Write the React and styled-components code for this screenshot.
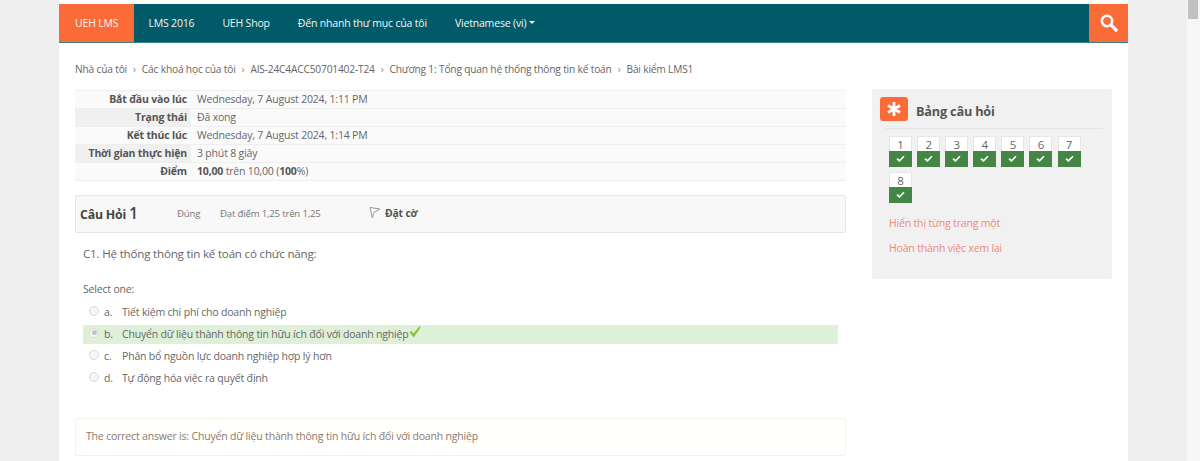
import React from "react";
import styled, { createGlobalStyle } from "styled-components";

const Global = createGlobalStyle`
  html, body { margin: 0; padding: 0; height: 100%; overflow: hidden; background: #efefef; }
  body { font-family: "Open Sans", "DejaVu Sans", sans-serif; font-size: 10.5px; letter-spacing: -0.18px; color: #555; }
  * { box-sizing: border-box; }
`;

const Viewport = styled.div`
  display: flex;
  width: 1200px;
  height: 461px;
  overflow: hidden;
  background: #efefef;
`;
const PageArea = styled.div`
  flex: 1;
  padding: 0 59px;
  overflow: hidden;
`;
const Scrollbar = styled.div`
  width: 13px;
  background: #f6f6f6;
  padding: 0 2px 0 1px;
`;
const Thumb = styled.div`
  height: 19px;
  background: #c1c1c1;
`;
const Sheet = styled.div`
  width: 1069px;
  height: 461px;
  padding-top: 4px;
  background: #fff;
`;
const Nav = styled.nav`
  display: flex;
  height: 38.5px;
  background: #015a68;
  border-bottom: 1px solid #3b7f8a;
`;
const NavItem = styled.a`
  display: flex;
  align-items: center;
  padding: 0 ${p => (p.$active ? 16 : 14)}px;
  color: #f4f4f4;
  font-size: 10.5px;
  font-weight: 500;
  background: ${p => (p.$active ? "#fb6b38" : "transparent")};
`;
const Caret = styled.span`
  display: inline-block;
  margin-left: 3px;
  border-left: 3px solid transparent;
  border-right: 3px solid transparent;
  border-top: 3px solid #f4f4f4;
`;
const SearchButton = styled.div`
  margin-left: auto;
  width: 39px;
  display: flex;
  align-items: center;
  justify-content: center;
  background: #fb6b38;
`;
const Crumbs = styled.div`
  display: flex;
  align-items: center;
  height: 47px;
  padding: 6px 0 0 16px;
  color: #666;
  font-size: 10.2px;
`;
const Sep = styled.span`
  margin: 0 6px;
  color: #888;
  font-size: 10px;
`;
const Columns = styled.div`
  display: flex;
  padding-left: 16px;
`;
const Main = styled.main`
  width: 771px;
`;
const Side = styled.aside`
  width: 240px;
  height: 190px;
  margin: -1px 0 0 26px;
  padding: 8px 7px 0 8px;
  background: #f1f1f1;
  border-radius: 2px;
`;
const Summary = styled.div`
  border-top: 1px solid #eee;
`;
const SummaryRow = styled.div`
  display: flex;
  height: 18px;
  align-items: center;
  background: #fafafa;
  border-bottom: 1px solid #eee;
`;
const SummaryLabel = styled.div`
  width: 116px;
  height: 100%;
  display: flex;
  align-items: center;
  justify-content: flex-end;
  padding-right: 4px;
  font-weight: 700;
  color: #555;
  font-size: 10.5px;
  background: ${p => (p.$shade ? "#f0f0f0" : "transparent")};
`;
const SummaryValue = styled.div`
  padding-left: 6px;
  color: #666;
  font-size: 10.5px;
  b { color: #555; }
`;
const QuestionHead = styled.div`
  display: flex;
  align-items: center;
  height: 38px;
  margin-top: 14px;
  padding: 0 0 1px 4px;
  background: #f8f8f8;
  border: 1px solid #e6e6e6;
  border-radius: 2px;
`;
const QuestionNo = styled.div`
  width: 97px;
  font-size: 12.3px;
  font-weight: 700;
  color: #444;
  span { font-size: 16px; font-weight: 600; }
`;
const State = styled.div`
  width: 43px;
  font-size: 9.6px;
  color: #777;
`;
const Grade = styled.div`
  width: 149px;
  font-size: 9.6px;
  color: #777;
`;
const Flag = styled.div`
  display: flex;
  align-items: center;
  gap: 4px;
  font-size: 10.4px;
  font-weight: 700;
  color: #555;
`;
const QuestionText = styled.div`
  padding: 12px 0 0 8px;
  font-size: 11.6px;
  line-height: 18px;
  letter-spacing: -0.2px;
  color: #666;
`;
const SelectOne = styled.div`
  margin: 19px 0 6px 8px;
  height: 15px;
  line-height: 15px;
  font-size: 10.5px;
  color: #666;
`;
const Option = styled.div`
  display: flex;
  align-items: center;
  height: 19.5px;
  margin: 0 8px 2.5px 8px;
  padding-left: 6px;
  font-size: 10.5px;
  color: #666;
  background: ${p => (p.$correct ? "#dff0d8" : "transparent")};
`;
const Radio = styled.span`
  position: relative;
  width: 10px;
  height: 10px;
  margin-top: -3px;
  border: 1px solid #d8d8d8;
  border-radius: 50%;
  background: #f6f6f6;
  &::after {
    content: "";
    display: ${p => (p.$checked ? "block" : "none")};
    position: absolute;
    inset: 1.5px;
    border-radius: 50%;
    background: #c4c4c4;
  }
`;
const OptionKey = styled.span`
  width: 18px;
  margin-left: 5px;
`;
const CorrectMark = styled.svg`
  width: 12px;
  height: 12px;
  margin-top: -5px;
`;
const RightAnswer = styled.div`
  display: flex;
  align-items: center;
  height: 38px;
  margin-top: 30px;
  padding: 0 0 3px 10px;
  font-size: 10.5px;
  color: #8a7a6c;
  background: #fffffd;
  border: 1px solid #f5f3e4;
  border-radius: 2px;
`;
const SideHead = styled.div`
  display: flex;
  align-items: center;
  height: 24px;
  margin-bottom: 7px;
  gap: 8px;
`;
const SideIcon = styled.div`
  width: 28px;
  height: 24px;
  display: flex;
  align-items: center;
  justify-content: center;
  background: #fb6b38;
  border-radius: 3px;
`;
const SideTitle = styled.div`
  font-size: 12.7px;
  font-weight: 700;
  color: #555;
  padding-top: 4px;
`;
const Rule = styled.div`
  height: 1px;
  margin: 0 3px 7px 5px;
  background: #e6e6e6;
`;
const Grid = styled.div`
  display: flex;
  flex-wrap: wrap;
  gap: 5px 5.1px;
  padding-left: 9px;
  width: 212px;
`;
const Cell = styled.div`
  width: 23px;
  height: 31px;
  display: flex;
  flex-direction: column;
`;
const CellNo = styled.div`
  height: 15px;
  background: #fff;
  border: 1px solid #e6e6e6;
  border-bottom: 0;
  text-align: center;
  font-size: 11.5px;
  line-height: 15px;
  color: #666;
`;
const CellMark = styled.div`
  flex: 1;
  display: flex;
  align-items: center;
  justify-content: center;
  background: #458546;
`;
const SideLink = styled.a`
  display: block;
  margin-left: 9px;
  font-size: 10.5px;
  color: #ea8a7c;
  margin-top: ${p => p.$mt}px;
`;

const MiniCheck = () => (
  <svg width="9" height="7" viewBox="0 0 9 7" aria-hidden="true">
    <path d="M1 3.6 L3.4 5.8 L8 1.2" fill="none" stroke="#fff" strokeWidth="1.6" />
  </svg>
);

const summary = [
  ["Bắt đầu vào lúc", "Wednesday, 7 August 2024, 1:11 PM"],
  ["Trạng thái", "Đã xong", true],
  ["Kết thúc lúc", "Wednesday, 7 August 2024, 1:14 PM"],
  ["Thời gian thực hiện", "3 phút 8 giây", true],
];

const options = [
  ["a.", "Tiết kiệm chi phí cho doanh nghiệp"],
  ["b.", "Chuyển dữ liệu thành thông tin hữu ích đối với doanh nghiệp", true],
  ["c.", "Phân bổ nguồn lực doanh nghiệp hợp lý hơn"],
  ["d.", "Tự động hóa việc ra quyết định"],
];

export default function App() {
  return (
    <Viewport>
      <Global />
      <PageArea>
        <Sheet>
          <Nav>
            <NavItem $active>UEH LMS</NavItem>
            <NavItem>LMS 2016</NavItem>
            <NavItem>UEH Shop</NavItem>
            <NavItem>Đến nhanh thư mục của tôi</NavItem>
            <NavItem>Vietnamese ‎(vi)‎<Caret /></NavItem>
            <SearchButton>
              <svg width="18" height="18" viewBox="0 0 17 17" aria-hidden="true">
                <circle cx="6.6" cy="6.6" r="4.9" fill="none" stroke="#fff" strokeWidth="2.4" />
                <path d="M10.6 10.6 L15.2 15.2" stroke="#fff" strokeWidth="3" strokeLinecap="round" />
              </svg>
            </SearchButton>
          </Nav>
          <Crumbs>
            Nhà của tôi<Sep>›</Sep>Các khoá học của tôi<Sep>›</Sep>AIS-24C4ACC50701402-T24<Sep>›</Sep>
            Chương 1: Tổng quan hệ thống thông tin kế toán<Sep>›</Sep>Bài kiểm LMS1
          </Crumbs>
          <Columns>
            <Main>
              <Summary>
                {summary.map(([label, value, shade]) => (
                  <SummaryRow key={label}>
                    <SummaryLabel $shade={shade}>{label}</SummaryLabel>
                    <SummaryValue>{value}</SummaryValue>
                  </SummaryRow>
                ))}
                <SummaryRow>
                  <SummaryLabel>Điểm</SummaryLabel>
                  <SummaryValue><b>10,00</b> trên 10,00 (<b>100</b>%)</SummaryValue>
                </SummaryRow>
              </Summary>
              <QuestionHead>
                <QuestionNo>Câu Hỏi <span>1</span></QuestionNo>
                <State>Đúng</State>
                <Grade>Đạt điểm 1,25 trên 1,25</Grade>
                <Flag>
                  <svg width="12" height="12" viewBox="0 0 12 12" aria-hidden="true">
                    <path d="M1 0.5 L10.7 2 L5 5.3 L3.3 10.7 Z" fill="#fff" stroke="#888" strokeWidth="0.9" strokeLinejoin="round" />
                  </svg>
                  Đặt cờ
                </Flag>
              </QuestionHead>
              <QuestionText>C1. Hệ thống thông tin kế toán có chức năng:</QuestionText>
              <SelectOne>Select one:</SelectOne>
              {options.map(([key, text, correct]) => (
                <Option key={key} $correct={correct}>
                  <Radio $checked={correct} />
                  <OptionKey>{key}</OptionKey>
                  {text}
                  {correct && (
                    <CorrectMark viewBox="0 0 12 12" aria-hidden="true">
                      <path d="M0.3 6.2 L2.3 4.8 L4.4 7.6 L10.3 0.3 L11.8 1.2 L4.7 11.6 Z" fill="#8ac640" />
                    </CorrectMark>
                  )}
                </Option>
              ))}
              <RightAnswer>The correct answer is: Chuyển dữ liệu thành thông tin hữu ích đối với doanh nghiệp</RightAnswer>
            </Main>
            <Side>
              <SideHead>
                <SideIcon>
                  <svg width="16" height="16" viewBox="0 0 16 16" aria-hidden="true">
                    <path d="M8 1 V15 M2 4.5 L14 11.5 M14 4.5 L2 11.5" stroke="#fff" strokeWidth="2.8" />
                  </svg>
                </SideIcon>
                <SideTitle>Bảng câu hỏi</SideTitle>
              </SideHead>
              <Rule />
              <Grid>
                {[1, 2, 3, 4, 5, 6, 7, 8].map(n => (
                  <Cell key={n}>
                    <CellNo>{n}</CellNo>
                    <CellMark><MiniCheck /></CellMark>
                  </Cell>
                ))}
              </Grid>
              <SideLink $mt={13}>Hiển thị từng trang một</SideLink>
              <SideLink $mt={11}>Hoàn thành việc xem lại</SideLink>
            </Side>
          </Columns>
        </Sheet>
      </PageArea>
      <Scrollbar><Thumb /></Scrollbar>
    </Viewport>
  );
}
